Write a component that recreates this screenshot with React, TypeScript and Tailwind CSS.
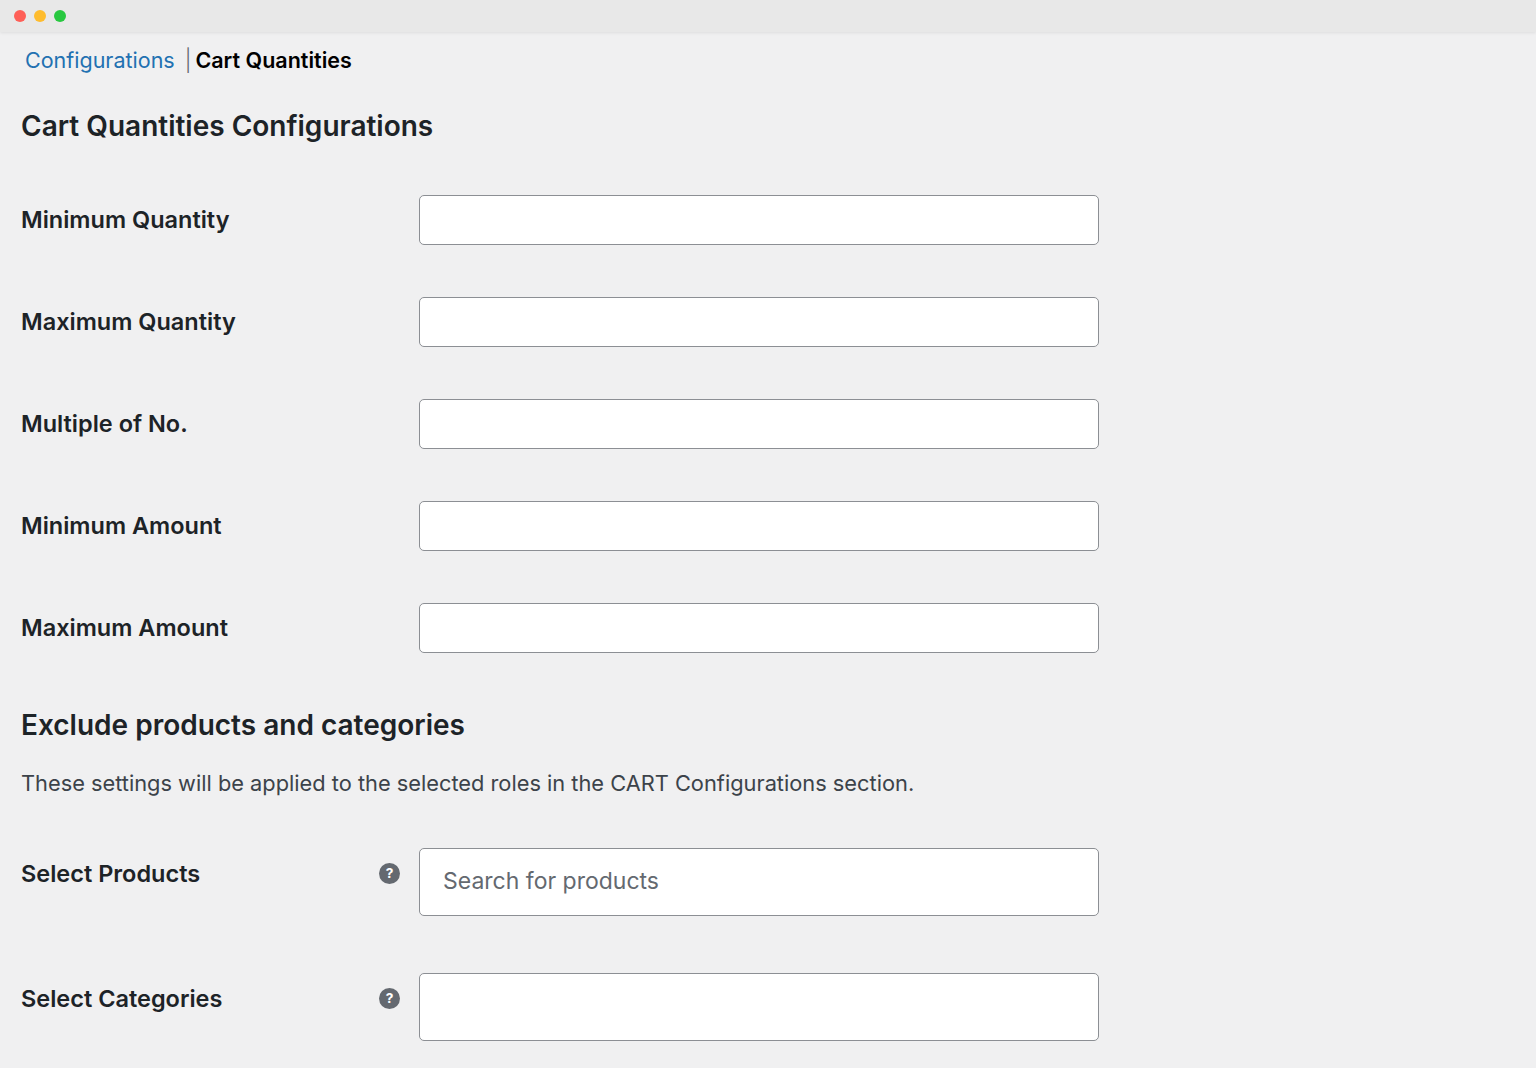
import React from 'react';

const fields = ['Minimum Quantity', 'Maximum Quantity', 'Multiple of No.', 'Minimum Amount', 'Maximum Amount'];

const Help = () => (
  <svg width="21" height="21" viewBox="0 0 20 20" className="shrink-0">
    <circle cx="10" cy="10" r="10" fill="#646970" />
    <text x="10" y="14.5" textAnchor="middle" fontSize="13" fontWeight="700" fill="#fff" fontFamily="Inter, sans-serif">?</text>
  </svg>
);

const App: React.FC = () => {
  return (
    <div className="w-[1536px] h-[1068px] overflow-hidden bg-[#f0f0f1] text-[#1d2327]" style={{ fontFamily: 'Inter, "Noto Sans", sans-serif' }}>
      <div className="h-[32px] bg-[#e8e8e8] flex items-center gap-[8px] px-[14px] shadow-[0_1px_3px_rgba(0,0,0,0.08)]">
        <span className="w-[12px] h-[12px] rounded-full bg-[#fe5f57]" />
        <span className="w-[12px] h-[12px] rounded-full bg-[#febc2e]" />
        <span className="w-[12px] h-[12px] rounded-full bg-[#28c840]" />
      </div>
      <div className="pl-[21px]">
        <div className="flex items-center h-[56px] pl-[4px] text-[21.5px]">
          <span className="text-[#2271b1]">Configurations</span>
          <span className="text-[#646970] ml-[10px] mr-[4px] font-light">|</span>
          <span className="font-semibold text-black">Cart Quantities</span>
        </div>
        <h1 className="text-[28px] font-semibold mt-[20px] leading-[36px]">Cart Quantities Configurations</h1>
        <div className="mt-[51px] flex flex-col gap-[52px]">
          {fields.map((f) => (
            <div key={f} className="flex items-center">
              <div className="w-[398px] text-[23.5px] font-semibold">{f}</div>
              <div className="w-[680px] h-[50px] bg-white border border-[#8c8f94] rounded-[5px]" />
            </div>
          ))}
        </div>
        <h2 className="text-[28px] font-semibold mt-[54px] leading-[36px]">Exclude products and categories</h2>
        <p className="text-[21.8px] text-[#3c434a] mt-[24px]">These settings will be applied to the selected roles in the CART Configurations section.</p>
        <div className="mt-[48px] flex flex-col gap-[57px]">
          {['Select Products', 'Select Categories'].map((f, i) => (
            <div key={f} className="flex items-start">
              <div className="w-[398px] flex items-start justify-between pr-[19px] pt-[8px]">
                <span className="text-[23.5px] font-semibold">{f}</span>
                <span className="mt-[7px]"><Help /></span>
              </div>
              <div className="w-[680px] h-[68px] bg-white border border-[#8c8f94] rounded-[5px] flex items-center px-[23px] text-[23px] text-[#646970]">
                {i === 0 ? 'Search for products' : ''}
              </div>
            </div>
          ))}
        </div>
      </div>
    </div>
  );
};

export default App;
